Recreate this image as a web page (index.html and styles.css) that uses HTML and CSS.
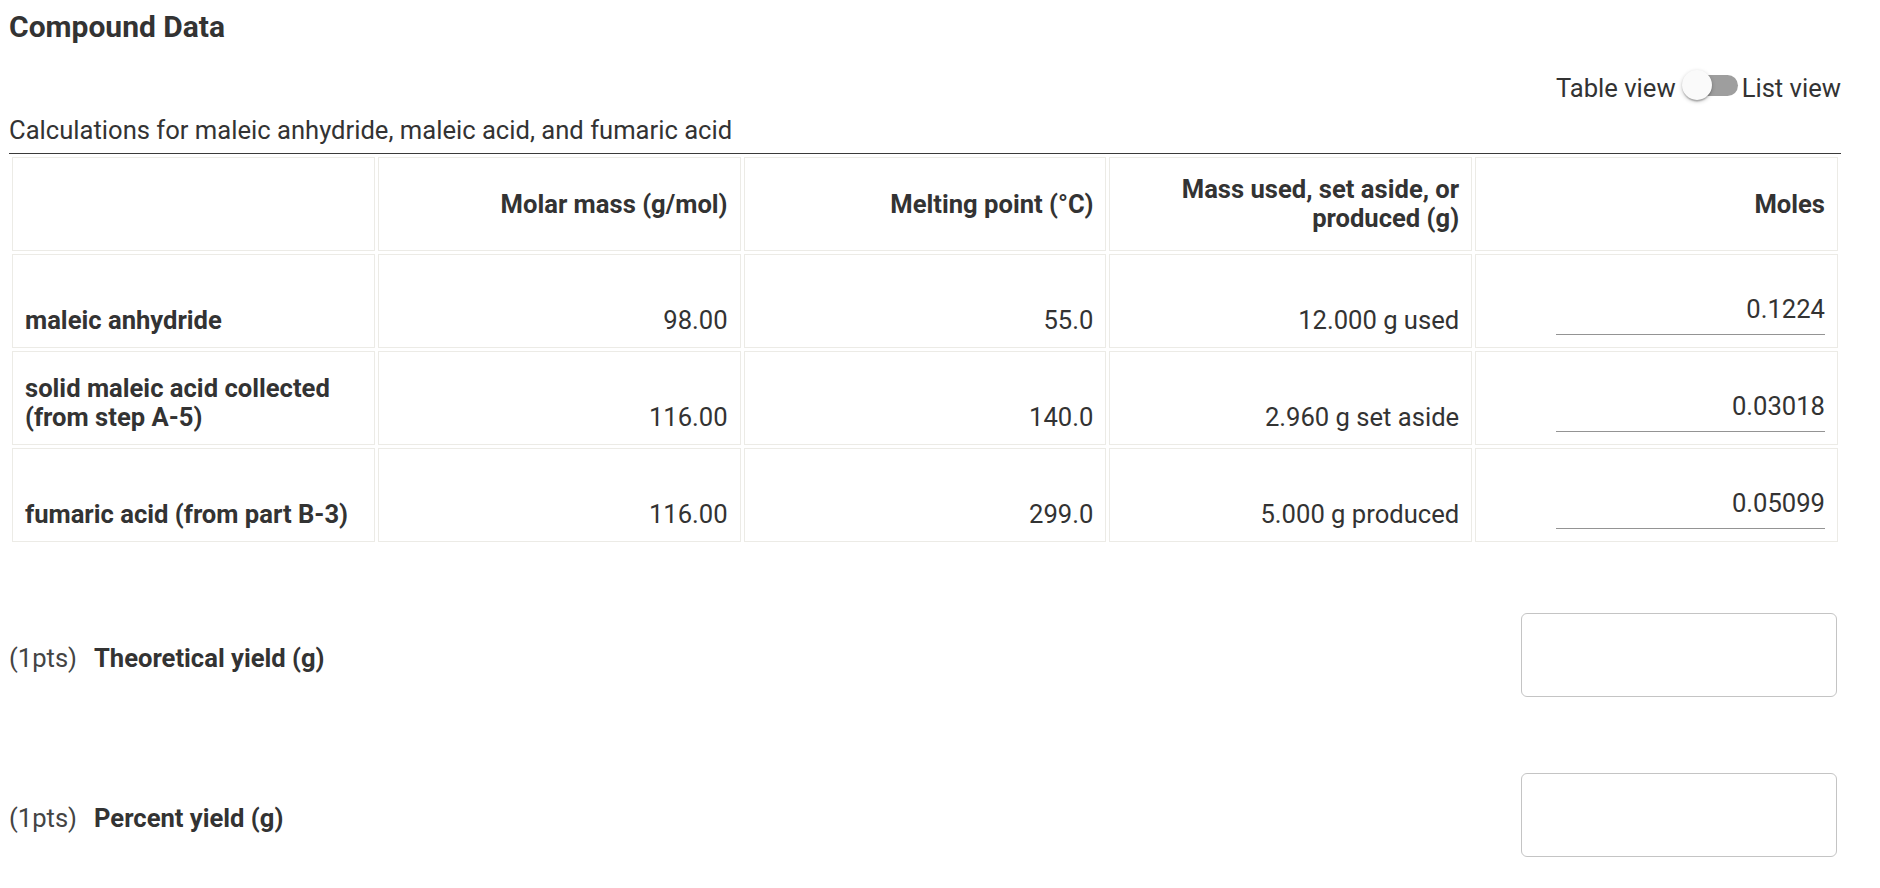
FILE: index.html
```html
<!DOCTYPE html>
<html lang="en">
<head>
<meta charset="utf-8">
<title>Compound Data</title>
<link rel="stylesheet" href="styles.css">
</head>
<body>
<div class="page">
  <h2 class="title">Compound Data</h2>

  <div class="view-toggle">
    <span class="view-label">Table view</span>
    <span class="switch" role="switch" aria-checked="false">
      <span class="switch-track"></span>
      <span class="switch-thumb"></span>
    </span>
    <span class="view-label">List view</span>
  </div>

  <div class="caption">Calculations for maleic anhydride, maleic acid, and fumaric acid</div>

  <table class="data-table">
    <thead>
      <tr>
        <th></th>
        <th>Molar mass (g/mol)</th>
        <th>Melting point (°C)</th>
        <th>Mass used, set aside, or produced (g)</th>
        <th>Moles</th>
      </tr>
    </thead>
    <tbody>
      <tr>
        <td class="name">maleic anhydride</td>
        <td>98.00</td>
        <td>55.0</td>
        <td>12.000 g used</td>
        <td><div class="moles-input">0.1224</div></td>
      </tr>
      <tr>
        <td class="name">solid maleic acid collected (from step A-5)</td>
        <td>116.00</td>
        <td>140.0</td>
        <td>2.960 g set aside</td>
        <td><div class="moles-input">0.03018</div></td>
      </tr>
      <tr>
        <td class="name">fumaric acid (from part B-3)</td>
        <td>116.00</td>
        <td>299.0</td>
        <td>5.000 g produced</td>
        <td><div class="moles-input">0.05099</div></td>
      </tr>
    </tbody>
  </table>

  <div class="questions">
    <div class="question">
      <div class="q-label"><span class="pts">(1pts)</span><span class="q-text">Theoretical yield (g)</span></div>
      <div class="answer-box"></div>
    </div>
    <div class="question">
      <div class="q-label"><span class="pts">(1pts)</span><span class="q-text">Percent yield (g)</span></div>
      <div class="answer-box"></div>
    </div>
  </div>
</div>
</body>
</html>
```

FILE: styles.css
```css
* {
  box-sizing: border-box;
}

body {
  margin: 0;
  background: #ffffff;
  color: #333333;
  font-family: Roboto, "Liberation Sans", Arial, sans-serif;
  font-size: 25.6px;
  line-height: 29px;
}

.page {
  margin-left: 9px;
  width: 1832px;
}

.title {
  margin: 0;
  padding-top: 9px;
  font-size: 30px;
  line-height: 35px;
  font-weight: 700;
  color: #333333;
}

.view-toggle {
  display: flex;
  justify-content: flex-end;
  align-items: flex-start;
  margin-top: 30px;
}

.view-label {
  color: #333333;
}

.switch {
  position: relative;
  display: block;
  width: 56px;
  height: 29px;
  margin: 0 4px 0 6px;
}

.switch-track {
  position: absolute;
  left: 5px;
  top: 1px;
  width: 51px;
  height: 21px;
  border-radius: 11px;
  background: #9e9e9e;
}

.switch-thumb {
  position: absolute;
  left: 0;
  top: -4px;
  width: 30px;
  height: 30px;
  border-radius: 50%;
  background: #fafafa;
  box-shadow: 0 1.5px 4px rgba(0, 0, 0, 0.22), 0 1.5px 1.5px rgba(0, 0, 0, 0.14), 0 3px 1.5px -1.5px rgba(0, 0, 0, 0.12);
}

.caption {
  margin-top: 13px;
  padding-bottom: 8px;
  border-bottom: 1px solid #3a3a3a;
}

.data-table {
  width: 100%;
  table-layout: fixed;
  border-collapse: separate;
  border-spacing: 3px;
}

.data-table th,
.data-table td {
  box-sizing: content-box;
  height: 68px;
  padding: 12px;
  border: 1px solid #ecebe6;
  text-align: right;
}

.data-table th {
  font-weight: 700;
  vertical-align: middle;
}

.data-table td {
  font-weight: 400;
  vertical-align: bottom;
}

.data-table td.name {
  text-align: left;
  font-weight: 700;
}

.moles-input {
  width: 269px;
  margin-left: auto;
  padding: 27px 0 10px;
  border-bottom: 1px solid #949494;
  text-align: right;
}

.questions {
  margin-top: 30px;
}

.question {
  display: flex;
  justify-content: space-between;
  align-items: flex-start;
  padding: 38px 4px 38px 0;
}

.q-label {
  margin-top: 31px;
  display: flex;
}

.pts {
  color: #444444;
  margin-right: 17px;
}

.q-text {
  font-weight: 700;
}

.answer-box {
  width: 316px;
  height: 84px;
  border: 1px solid #c4c4c4;
  border-radius: 6px;
  background: #ffffff;
}
```
